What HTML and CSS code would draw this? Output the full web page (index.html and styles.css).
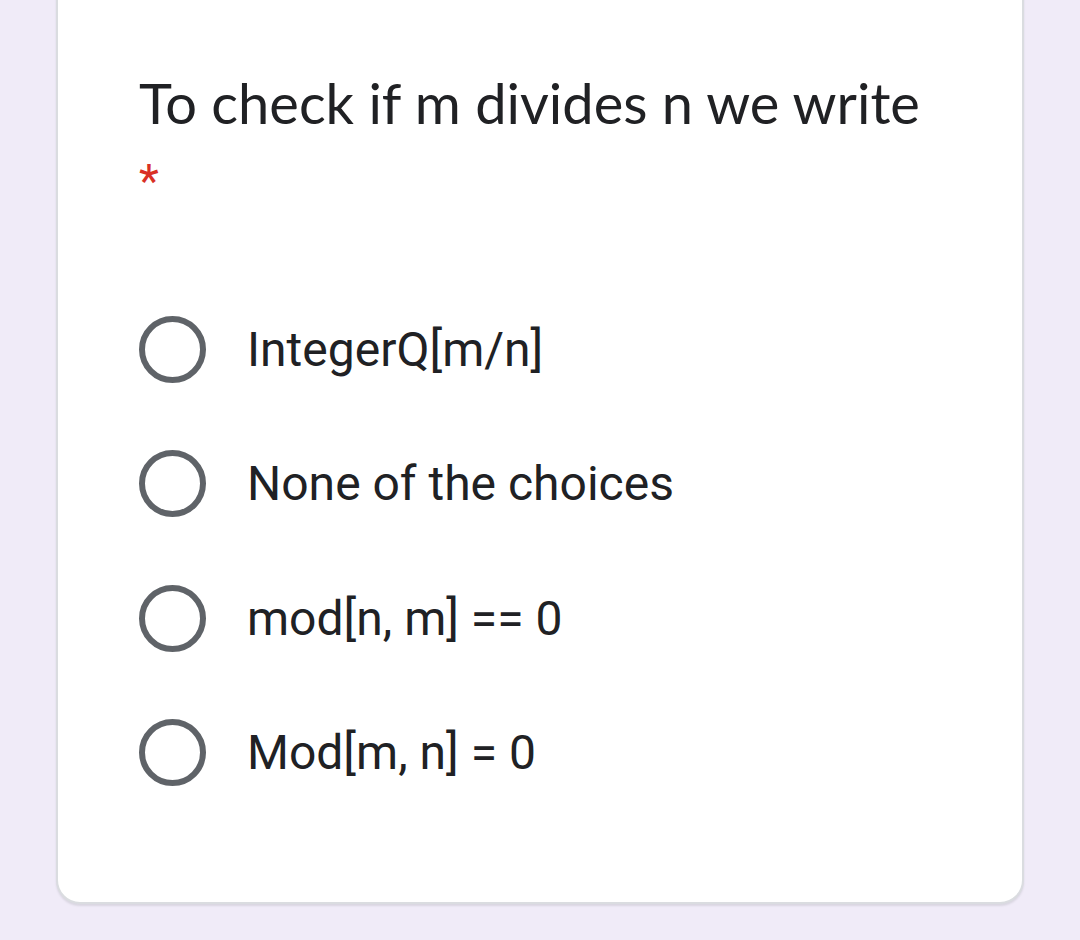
FILE: index.html
```html
<!DOCTYPE html>
<html>
<head>
<meta charset="utf-8">
<link rel="stylesheet" href="styles.css">
</head>
<body>
<div class="page">
  <div class="card">
    <div class="title">To check if m divides n we write</div>
    <div class="req">*</div>
    <div class="options">
      <div class="option"><span class="radio"></span><span class="label">IntegerQ[m/n]</span></div>
      <div class="option"><span class="radio"></span><span class="label">None of the choices</span></div>
      <div class="option"><span class="radio"></span><span class="label">mod[n, m] == 0</span></div>
      <div class="option"><span class="radio"></span><span class="label">Mod[m, n] = 0</span></div>
    </div>
  </div>
</div>
</body>
</html>
```
FILE: styles.css
```css
html, body {
  margin: 0;
  padding: 0;
  background: #f0ebf8;
  height: 940px;
  overflow: hidden;
}
.page {
  padding-left: 56px;
}
.card {
  box-sizing: border-box;
  width: 968px;
  margin-top: -30px;
  height: 934px;
  background: #fff;
  border: 2px solid #dadce0;
  border-radius: 24px;
  box-shadow: 0 2px 2px rgba(60, 64, 67, 0.12);
  padding: 0 0 0 81px;
}
.title {
  font-family: Lato, sans-serif;
  font-size: 56px;
  line-height: 60px;
  color: #202124;
  margin-top: 101px;
}
.req {
  font-family: Roboto, sans-serif;
  color: #d93025;
  font-size: 46px;
  line-height: 44px;
  margin-top: 26px;
}
.options {
  margin-top: 79px;
  display: flex;
  flex-direction: column;
}
.option {
  display: flex;
  align-items: center;
  height: 134.5px;
}
.radio {
  box-sizing: border-box;
  width: 67px;
  height: 67px;
  border: 6px solid #5f6368;
  border-radius: 50%;
  flex: none;
}
.label {
  font-family: Roboto, sans-serif;
  font-size: 48px;
  color: #202124;
  margin-left: 41px;
}
```
